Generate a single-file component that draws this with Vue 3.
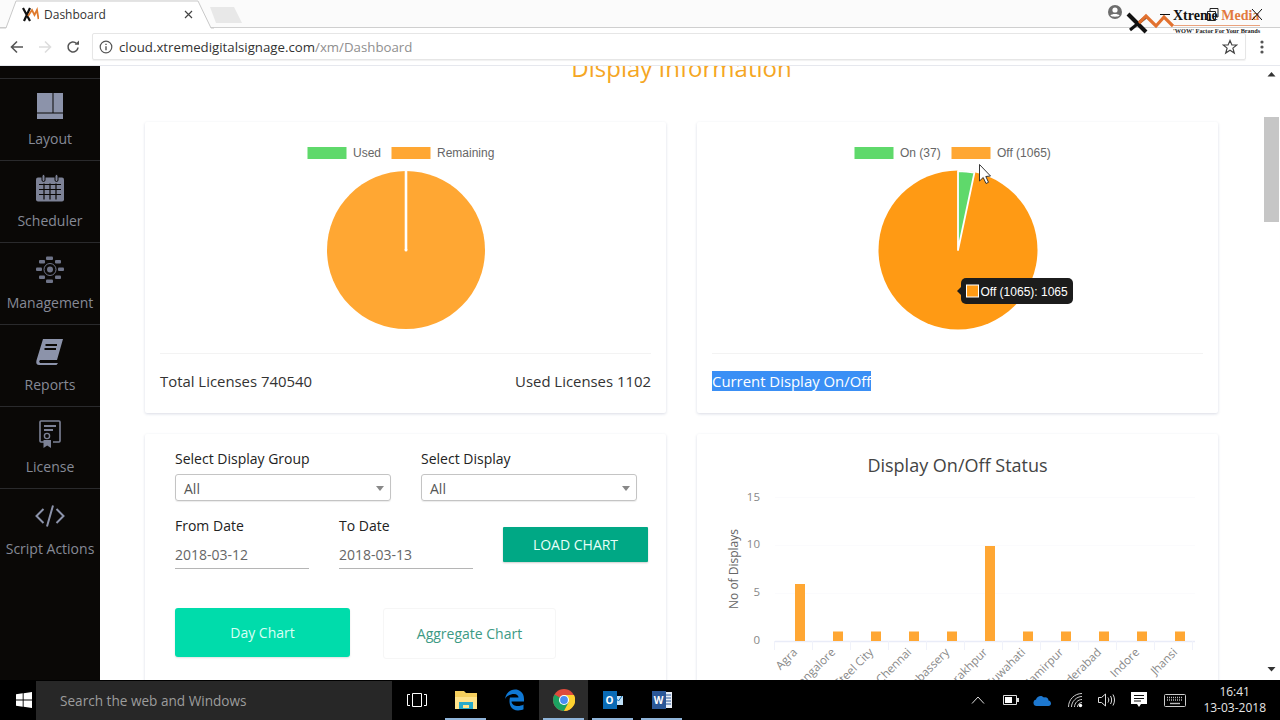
<template>
  <div class="screen">
    <!-- browser chrome -->
    <div class="tabstrip">
      <div class="tab">
        <svg class="tab-shape" width="214" height="29" viewBox="0 0 214 29">
          <path d="M0 28H6L16 1H198L211 28H214" fill="#fff" stroke="#c9c9c9" />
        </svg>
        <svg class="favicon" width="17" height="15" viewBox="0 0 17 15">
          <path d="M1 1L8 14M8 1L2 14" stroke="#111" stroke-width="2.2" fill="none" />
          <path d="M6 9L10 3L12.5 8L15 3L16.5 12" stroke="#e07b2e" stroke-width="1.8" fill="none" />
        </svg>
        <span class="tab-title">Dashboard</span>
        <span class="tab-close">
          <svg width="9" height="9" viewBox="0 0 9 9"><path d="M1 1L8 8M8 1L1 8" stroke="#444" stroke-width="1.2" /></svg>
        </span>
      </div>
      <svg class="newtab" width="34" height="17" viewBox="0 0 34 17"><path d="M0 0H24L32 16H6Z" fill="#e8e8e8" /></svg>
    </div>
    <div class="logo-overlay">
      <svg class="user-ic" width="16" height="16" viewBox="0 0 16 16">
        <circle cx="8" cy="8" r="7" fill="#6d6d6d" />
        <circle cx="8" cy="6" r="2.6" fill="#fff" />
        <path d="M3.4 11.6C4.6 9.6 11.4 9.6 12.6 11.6C11.4 13.2 4.6 13.2 3.4 11.6Z" fill="#fff" />
      </svg>
      <svg class="logo-mark" width="48" height="22" viewBox="0 0 48 22">
        <path d="M2 2L20 20" stroke="#111" stroke-width="4" />
        <path d="M20 5L4 18" stroke="#111" stroke-width="3" />
        <path d="M13 11L20 4L30 14L38 5L47 14" stroke="#e2712f" stroke-width="3.2" fill="none" />
      </svg>
      <div class="logo-words">
        <div class="logo-name">Xtreme <em>Media</em></div>
        <div class="logo-tag">'WOW' Factor For Your Brands</div>
      </div>
      <svg class="win-ctl" width="112" height="14" viewBox="0 0 112 14">
        <path d="M10 6.5H20" stroke="#111" />
        <path d="M57.5 3.5H65.5V12.5H57.5ZM60 3V.5H68V9H66" stroke="#222" fill="none" />
        <path d="M102 1L112 12M112 1L102 12" stroke="#111" />
      </svg>
    </div>
    <div class="toolbar">
      <svg class="nav-ic" width="14" height="14" viewBox="0 0 14 14"><path d="M13 7H2M7 1.5L1.5 7L7 12.5" stroke="#555" stroke-width="1.6" fill="none" /></svg>
      <svg class="nav-ic" width="14" height="14" viewBox="0 0 14 14"><path d="M1 7H12M7 1.5L12.5 7L7 12.5" stroke="#ddd" stroke-width="1.6" fill="none" /></svg>
      <svg class="nav-ic" width="14" height="14" viewBox="0 0 14 14"><path d="M12 7.5A5 5 0 1 1 10.4 3.3" stroke="#555" stroke-width="1.6" fill="none" /><path d="M8.6 4.8H13V.5Z" fill="#555" /></svg>
      <div class="omnibox">
        <svg width="14" height="14" viewBox="0 0 14 14">
          <circle cx="7" cy="7" r="5.8" stroke="#555" stroke-width="1.2" fill="none" />
          <path d="M7 6.2V10.2M7 3.8V5" stroke="#555" stroke-width="1.4" />
        </svg>
        <span class="url">cloud.xtremedigitalsignage.com<span class="url-path">/xm/Dashboard</span></span>
        <svg class="star" width="16" height="16" viewBox="0 0 16 16">
          <path d="M8 1.5L9.9 6H14.8L10.9 9.1L12.3 14L8 11.2L3.7 14L5.1 9.1L1.2 6H6.1Z" stroke="#444" stroke-width="1.2" fill="none" />
        </svg>
      </div>
      <svg class="kebab" width="4" height="14" viewBox="0 0 4 14">
        <circle cx="2" cy="2" r="1.6" fill="#555" /><circle cx="2" cy="7" r="1.6" fill="#555" /><circle cx="2" cy="12" r="1.6" fill="#555" />
      </svg>
    </div>

    <div class="main">
      <!-- side menu -->
      <nav class="sidebar">
        <a class="nav-item">
          <svg width="26" height="26" viewBox="0 0 26 26">
            <path d="M0 0H15.5V19.5H0ZM16.5 0H26V19.5H16.5ZM0 20.5H26V26H0Z" fill="#8c93aa" />
          </svg>
          <span>Layout</span>
        </a>
        <a class="nav-item">
          <svg width="28" height="27" viewBox="0 0 28 27">
            <path d="M2 3H26A2 2 0 0 1 28 5V25A2 2 0 0 1 26 27H2A2 2 0 0 1 0 25V5A2 2 0 0 1 2 3Z" fill="#7d8296" />
            <rect x="6" y="0" width="3" height="7" rx="1.5" fill="#7d8296" stroke="#0a0806" />
            <rect x="19" y="0" width="3" height="7" rx="1.5" fill="#7d8296" stroke="#0a0806" />
            <path d="M3 10H25M3 15H25M3 20H25M8 9V25M14 9V25M20 9V25" stroke="#0a0806" stroke-width="1.2" />
          </svg>
          <span>Scheduler</span>
        </a>
        <a class="nav-item">
          <svg width="28" height="27" viewBox="0 0 28 27">
            <g fill="#6f7488">
              <rect x="10" y="0" width="7" height="3.5" rx="1" />
              <rect x="19" y="3.5" width="6" height="3.5" rx="1" />
              <rect x="22" y="11" width="6" height="3.5" rx="1" />
              <rect x="19" y="19" width="6" height="3.5" rx="1" />
              <rect x="10" y="23" width="7" height="3.5" rx="1" />
              <rect x="3" y="19" width="6" height="3.5" rx="1" />
              <rect x="0" y="11" width="6" height="3.5" rx="1" />
              <rect x="3" y="3.5" width="6" height="3.5" rx="1" />
            </g>
            <circle cx="14" cy="13" r="6" stroke="#6f7488" fill="none" />
            <circle cx="14" cy="13" r="3" fill="#6f7488" />
          </svg>
          <span>Management</span>
        </a>
        <a class="nav-item">
          <svg width="28" height="26" viewBox="0 0 28 26">
            <path d="M7 0H27L21 21H4A2 2 0 0 0 4 24H22L20.5 26H3C0 26 0 23 .6 21Z" fill="#8c93aa" />
            <path d="M9.5 6H21M8.5 10H20" stroke="#0a0806" stroke-width="1.8" />
          </svg>
          <span>Reports</span>
        </a>
        <a class="nav-item">
          <svg width="22" height="28" viewBox="0 0 22 28">
            <path d="M7 22H2A1 1 0 0 1 1 21V2A1 1 0 0 1 2 1H20A1 1 0 0 1 21 2V21A1 1 0 0 1 20 22H14" stroke="#7d8296" stroke-width="1.6" fill="none" />
            <path d="M5 6H17M5 10H14" stroke="#7d8296" stroke-width="1.8" />
            <circle cx="8" cy="16" r="2.6" stroke="#7d8296" stroke-width="1.4" fill="none" />
            <path d="M4.5 20H12V28L8.2 25.5L4.5 28Z" fill="#7d8296" />
          </svg>
          <span>License</span>
        </a>
        <a class="nav-item">
          <svg width="30" height="24" viewBox="0 0 30 24">
            <path d="M8.5 5L1.5 12L8.5 19M21.5 5L28.5 12L21.5 19M18 1.5L12 22.5" stroke="#8c93aa" stroke-width="2" fill="none" />
          </svg>
          <span>Script Actions</span>
        </a>
      </nav>

      <div class="content">
        <h2 class="page-title">Display Information</h2>
        <div class="cards">
          <section class="card">
            <svg class="pie" width="521" height="230" viewBox="145 123 521 230">
              <rect x="307.500" y="147" width="39" height="12" fill="#5fd96b" />
              <text x="353" y="157" class="legend">Used</text>
              <rect x="391.500" y="147" width="39" height="12" fill="#ffa733" />
              <text x="437" y="157" class="legend">Remaining</text>
              <circle cx="406" cy="250" r="79" fill="#ffa733" />
              <path d="M406 250V170" stroke="#fff" stroke-width="2.600" />
              <circle cx="406" cy="250" r="1.500" fill="#fff" />
            </svg>
            <div class="card-foot">
              <span>Total Licenses 740540</span>
              <span>Used Licenses 1102</span>
            </div>
          </section>

          <section class="card">
            <svg class="pie" width="521" height="230" viewBox="697 123 521 230">
              <rect x="854.500" y="147" width="39" height="12" fill="#5fd96b" />
              <text x="900" y="157" class="legend">On (37)</text>
              <rect x="951.500" y="147" width="39" height="12" fill="#ffa733" />
              <text x="997" y="157" class="legend">Off (1065)</text>
              <circle cx="958" cy="250" r="79.500" fill="#ff9a14" />
              <path d="M958 250V171A79 79 0 0 1 974.400 172.700Z" fill="#5fd96b" stroke="#fff" stroke-width="1.800" stroke-linejoin="round" />
              <path d="M957 291L962 286V296Z" fill="#1c1c1c" />
              <rect x="961" y="278" width="112" height="26" rx="5" fill="#1c1c1c" />
              <rect x="966.500" y="285" width="12" height="12" fill="#ff9a14" stroke="#fff" />
              <text x="980.500" y="295.500" class="tip">Off (1065): 1065</text>
              <path d="M979.500 164.500V181L983.200 177.500L986 183.500L988.500 182.300L985.800 176.500L990.500 176Z" fill="#fff" stroke="#222" stroke-width=".9" />
            </svg>
            <div class="card-foot">
              <span class="picked">Current Display On/Off</span>
            </div>
          </section>

          <section class="card filter-card">
            <div class="row">
              <div class="field">
                <label>Select Display Group</label>
                <div class="select">All<i class="caret"></i></div>
              </div>
              <div class="field">
                <label>Select Display</label>
                <div class="select">All<i class="caret"></i></div>
              </div>
            </div>
            <div class="row dates">
              <div class="field date">
                <label>From Date</label>
                <div class="date-input">2018-03-12</div>
              </div>
              <div class="field date">
                <label>To Date</label>
                <div class="date-input">2018-03-13</div>
              </div>
              <button class="load-btn">LOAD CHART</button>
            </div>
            <div class="row chart-tabs">
              <button class="day-btn">Day Chart</button>
              <button class="agg-btn">Aggregate Chart</button>
            </div>
          </section>

          <section class="card">
            <svg class="bars" width="521" height="260" viewBox="697 435 521 260">
              <text x="957.500" y="472" class="chart-title">Display On/Off Status</text>
              <text x="760" y="501" class="tick">15</text>
              <text x="760" y="548" class="tick">10</text>
              <text x="760" y="596" class="tick">5</text>
              <text x="760" y="644" class="tick">0</text>
              <path d="M775 593.500H1195M775 545.500H1195M775 497.500H1195" stroke="#fbfbfd" />
              <path d="M775 641.500H1195" stroke="#e9ecf8" stroke-width="1.500" />
              <path v-for="i in 12" :key="i" :d="`M${774.500 + (i - 1) * 38} 641V650`" stroke="#f0f2fa" />
              <text class="y-title" transform="translate(738 569) rotate(-90)">No of Displays</text>
              <g v-for="(bar, i) in barData" :key="bar.name">
                <rect :x="795 + i * 38" :y="641 - bar.value * 9.5" width="10" :height="bar.value * 9.5" fill="#ffa733" />
                <text class="x-label" :transform="`translate(${798 + i * 38} 653) rotate(-45)`">{{ bar.name }}</text>
              </g>
            </svg>
          </section>
        </div>
      </div>

      <div class="scrollbar">
        <svg width="17" height="17" viewBox="0 0 17 17"><path d="M4.500 10.500L8.500 6L12.500 10.500Z" fill="#333" /></svg>
        <div class="thumb"></div>
        <svg class="arrow-down" width="17" height="17" viewBox="0 0 17 17"><path d="M4.500 4L8.500 8.500L12.500 4Z" fill="#333" /></svg>
      </div>
    </div>

    <!-- windows taskbar -->
    <div class="taskbar">
      <svg class="win-logo" width="16" height="16" viewBox="0 0 16 16">
        <path d="M0 2.300L6.700 1.300V7.600H0ZM7.600 1.200L16 0V7.600H7.600ZM0 8.400H6.700V14.700L0 13.700ZM7.600 8.400H16V16L7.600 14.800Z" fill="#fff" />
      </svg>
      <div class="search">Search the web and Windows</div>
      <div class="task-icons">
        <div class="task-ic">
          <svg width="20" height="14" viewBox="0 0 20 14">
            <path d="M5.500 .5H14.500V13.500H5.500Z" stroke="#fff" fill="none" />
            <path d="M3 1.500H.5V12.500H3M17 1.500H19.500V12.500H17" stroke="#fff" fill="none" />
          </svg>
        </div>
        <div class="task-ic open">
          <svg width="22" height="20" viewBox="0 0 22 20">
            <path d="M0 1H9L11 3H22V19H0Z" fill="#f5cf5d" />
            <path d="M0 7H22V19H0Z" fill="#ffe38a" />
            <path d="M4 12H18V19H4Z" fill="#27a9c9" />
            <path d="M8 15H14V18H8Z" fill="#ffe38a" />
          </svg>
        </div>
        <div class="task-ic">
          <svg width="20" height="22" viewBox="0 0 20 22">
            <path d="M3 12.500H19V10C19 3 14 .5 10 .5C5 .5 1 4 0 10C2 6.500 6 5 9 5C12 5 13.500 7 13.500 8.500H5C3.800 12 4 21.500 13 21.500C15.500 21.500 17.500 21 18.500 20.300V15.500C15 17.800 7 18 6.500 12.500" fill="#0f78d4" />
          </svg>
        </div>
        <div class="task-ic active open">
          <svg width="22" height="22" viewBox="0 0 22 22">
            <circle cx="11" cy="11" r="11" fill="#de4b3c" />
            <path d="M11 11L1.500 5.500A11 11 0 0 0 11 22L16 13Z" fill="#1ca261" />
            <path d="M11 6H21A11 11 0 0 1 11 22L15.500 13.500Z" fill="#fcd12f" />
            <circle cx="11" cy="11" r="5" fill="#fff" />
            <circle cx="11" cy="11" r="3.900" fill="#4a8df2" />
          </svg>
        </div>
        <div class="task-ic open">
          <div class="office outlook"><b>O</b><svg width="9" height="12" viewBox="0 0 9 12"><path d="M0 2H9V11H0Z" fill="#bfe0f7" /><path d="M1 3.500L4.500 7L8 2" stroke="#0a6bb5" fill="none" /></svg></div>
        </div>
        <div class="task-ic open">
          <div class="office word"><b>W</b><svg width="8" height="16" viewBox="0 0 8 16"><path d="M0 0H8V16H0Z" fill="#e8eef7" /><path d="M1 3H7M1 6H7M1 9H7M1 12H7" stroke="#2b5797" /></svg></div>
        </div>
      </div>
      <div class="tray">
        <svg class="t-chev" width="14" height="8" viewBox="0 0 14 8"><path d="M1 7.500L7 1L13 7.500" stroke="#ddd" fill="none" /></svg>
        <svg class="t-batt" width="16" height="10" viewBox="0 0 16 10"><path d="M.5 .5H13.500V9.500H.5Z" stroke="#ddd" fill="none" /><path d="M2 2H9V8H2Z" fill="#fff" /><path d="M14 3H16V7H14Z" fill="#ddd" /></svg>
        <svg class="t-cloud" width="18" height="11" viewBox="0 0 18 11"><path d="M3.500 11A3.300 3.300 0 0 1 3 4.500C4 1 8.500 -.500 11 2.500C14 1.800 15.500 4 15.500 5.500C17 5.700 18 7 18 8.500C18 10 17 11 15.500 11Z" fill="#1d78d0" /></svg>
        <svg class="t-wifi" width="15" height="15" viewBox="0 0 15 15"><path d="M.5 14C.5 6.500 6.500 .5 14 .5M3.500 14C3.500 8.500 8.500 3.500 14 3.500M6.500 14C6.500 10 10 6.500 14 6.500M9.500 14C9.500 11.500 11.500 9.500 14 9.500" stroke="#ccc" fill="none" /><circle cx="12.500" cy="12.500" r="1.700" fill="#fff" /></svg>
        <svg class="t-vol" width="17" height="14" viewBox="0 0 17 14"><path d="M.5 4.500H3.500L7.500 1V13L3.500 9.500H.5Z" stroke="#ddd" fill="none" /><path d="M10 4.500C11 6 11 8 10 9.500M12.500 3C14 5.500 14 8.500 12.500 11M15 1.500C17 5 17 9 15 12.500" stroke="#ddd" fill="none" /></svg>
        <svg class="t-note" width="16" height="16" viewBox="0 0 16 16"><path d="M0 0H16V12H10L8 15L6 12H0Z" fill="#fff" /><path d="M3 3.500H13M3 6.500H13M3 9H10" stroke="#111" /></svg>
        <svg class="t-keys" width="22" height="13" viewBox="0 0 22 13"><rect x=".5" y=".5" width="21" height="12" rx="1" stroke="#ccc" fill="none" /><path d="M3 3.500H19M3 6H19" stroke="#bbb" stroke-width="1.400" stroke-dasharray="1 1" /><path d="M6 9.500H16" stroke="#bbb" stroke-width="1.400" /></svg>
        <div class="clock">
          <span>16:41</span>
          <span>13-03-2018</span>
        </div>
      </div>
    </div>
  </div>
</template>

<script setup>
const barData = [
  { name: 'Agra', value: 6 },
  { name: 'Bangalore', value: 1 },
  { name: 'Steel City', value: 1 },
  { name: 'Chennai', value: 1 },
  { name: 'Ambassery', value: 1 },
  { name: 'Gorakhpur', value: 10 },
  { name: 'Guwahati', value: 1 },
  { name: 'Hamirpur', value: 1 },
  { name: 'Hyderabad', value: 1 },
  { name: 'Indore', value: 1 },
  { name: 'Jhansi', value: 1 }
]
</script>

<style>
html,
body {
  margin: 0;
  overflow: hidden;
}
</style>

<style scoped>
.screen {
  position: relative;
  width: 1280px;
  height: 720px;
  display: flex;
  flex-direction: column;
  overflow: hidden;
  background: #fff;
  font-family: "Open Sans", "Noto Sans", sans-serif;
}

/* Браузер */
.tabstrip {
  height: 28px;
  flex: none;
  display: flex;
  align-items: flex-start;
  background: #fbfbfb;
  border-bottom: 1px solid #cfcfcf;
  box-sizing: border-box;
}

.tab {
  position: relative;
  width: 210px;
  height: 28px;
  display: flex;
  align-items: center;
  padding-left: 22px;
  box-sizing: border-box;
}

.tab-shape {
  position: absolute;
  left: 0;
  top: 0;
}

.favicon {
  position: relative;
  margin-right: 5px;
}

.tab-title {
  position: relative;
  font-size: 12px;
  color: #333;
}

.tab-close {
  position: absolute;
  left: 184px;
  top: 10px;
  line-height: 0;
}

.newtab {
  margin-top: 7px;
}

.logo-overlay {
  position: absolute;
  top: 0;
  left: 1100px;
  width: 180px;
  height: 40px;
}

.user-ic {
  position: absolute;
  left: 7px;
  top: 4px;
}

.logo-mark {
  position: absolute;
  left: 26px;
  top: 12px;
}

.logo-words {
  position: absolute;
  left: 73px;
  top: 7px;
  width: 87px;
}

.logo-name {
  font-family: "Liberation Serif", serif;
  font-weight: 700;
  font-size: 14px;
  line-height: 18px;
  color: #111;
  border-bottom: 1px solid #eaa27d;
  white-space: nowrap;
}

.logo-name em {
  font-style: normal;
  color: #e2793f;
}

.logo-tag {
  font-family: "Liberation Serif", serif;
  font-weight: 700;
  font-size: 6.300px;
  line-height: 9px;
  color: #222;
  white-space: nowrap;
}

.win-ctl {
  position: absolute;
  left: 50px;
  top: 8px;
}

.toolbar {
  height: 38px;
  flex: none;
  display: flex;
  align-items: center;
  gap: 14px;
  padding: 0 16px 0 10px;
  box-sizing: border-box;
  background: #fff;
  border-bottom: 1px solid #e6e8ee;
}

.nav-ic {
  flex: none;
}

.omnibox {
  flex: 1;
  height: 27px;
  margin-left: -2px;
  display: flex;
  align-items: center;
  gap: 6px;
  padding: 0 7px 0 6px;
  border: 1px solid #e6e6e6;
  border-radius: 2px;
  box-sizing: border-box;
  box-shadow: 0 1px 1px rgba(0, 0, 0, 0.06);
}

.url {
  flex: 1;
  font-size: 13.250px;
  color: #333;
}

.url-path {
  color: #8f8f8f;
}

.kebab {
  flex: none;
}

/* Основная часть */
.main {
  height: 614px;
  flex: none;
  display: flex;
  overflow: hidden;
}

.sidebar {
  width: 100px;
  flex: none;
  padding-top: 12px;
  box-sizing: border-box;
  background: #0a0806;
}

.nav-item {
  height: 82px;
  display: flex;
  flex-direction: column;
  align-items: center;
  justify-content: flex-start;
  border-top: 1px solid #2a2a2c;
  box-sizing: border-box;
  padding-top: 13px;
  position: relative;
}

.nav-item svg {
  height: 28px;
  flex: none;
}

.nav-item span {
  margin-top: 9px;
  font-size: 14px;
  line-height: 20px;
  color: #868a96;
  white-space: nowrap;
}

.content {
  flex: 1;
  min-width: 0;
  padding: 0 45px;
  overflow: hidden;
}

.page-title {
  margin: -14px 0 38px;
  font-size: 24px;
  line-height: 32px;
  font-weight: 400;
  text-align: center;
  color: #f5a623;
}

.cards {
  display: grid;
  grid-template-columns: 521px 521px;
  grid-template-rows: 291px 400px;
  column-gap: 31px;
  row-gap: 21px;
}

.card {
  background: #fff;
  box-shadow: 0 1px 3px rgba(70, 80, 130, 0.2);
  border-radius: 2px;
}

.pie,
.bars {
  display: block;
  margin-top: 1px;
}

.legend {
  font-family: "Liberation Sans", Arial, sans-serif;
  font-size: 12px;
  fill: #666;
}

.tip {
  font-family: "Liberation Sans", Arial, sans-serif;
  font-size: 12px;
  fill: #fff;
}

.card-foot {
  margin: 0 15px;
  height: 54px;
  display: flex;
  align-items: center;
  justify-content: space-between;
  border-top: 1px solid #f3f3f3;
  font-size: 14.900px;
  line-height: 20px;
  color: #333;
}

.picked {
  background: #3a8ff5;
  color: #fff;
}

.filter-card {
  padding: 15px 15px 15px 30px;
  box-sizing: border-box;
}

.row {
  display: flex;
  gap: 30px;
}

.field {
  width: 216px;
  flex: none;
  font-size: 14px;
  color: #222;
}

.field label {
  display: block;
  line-height: 19px;
}

.select {
  position: relative;
  height: 27px;
  margin-top: 6px;
  padding-left: 8px;
  line-height: 28px;
  border: 1px solid #c4c4c4;
  border-radius: 3px;
  box-sizing: border-box;
  box-shadow: 0 1px 1px rgba(0, 0, 0, 0.08);
  color: #555;
}

.caret {
  position: absolute;
  right: 6px;
  top: 11px;
  border-left: 4px solid transparent;
  border-right: 4px solid transparent;
  border-top: 5px solid #888;
}

.dates {
  margin-top: 15px;
  align-items: flex-start;
}

.field.date {
  width: 134px;
}

.date-input {
  height: 28px;
  margin-top: 6px;
  line-height: 28px;
  border-bottom: 1px solid #b5b5b5;
  box-sizing: border-box;
  color: #666;
}

.load-btn {
  width: 145px;
  height: 35px;
  flex: none;
  margin: 11px 0 0 0;
  border: 0;
  border-radius: 1px;
  background: #00a885;
  color: #e8fff9;
  font: 14px "Open Sans", sans-serif;
  box-shadow: 0 1px 2px rgba(0, 0, 0, 0.2);
}

.chart-tabs {
  margin-top: 39px;
  gap: 33px;
  align-items: flex-start;
}

.day-btn {
  width: 175px;
  height: 49px;
  border: 0;
  border-radius: 3px;
  background: #00dcab;
  color: #d9fff5;
  font: 14px "Open Sans", sans-serif;
  box-shadow: 0 1px 2px rgba(0, 0, 0, 0.12);
}

.agg-btn {
  width: 173px;
  height: 51px;
  border: 1px solid #f6f6f6;
  border-radius: 3px;
  background: #fff;
  color: #3d9a84;
  font: 14px "Open Sans", sans-serif;
}

.chart-title {
  font-size: 18px;
  fill: #444;
  text-anchor: middle;
}

.tick {
  font-size: 11.500px;
  fill: #888;
  text-anchor: end;
}

.y-title {
  font-size: 12px;
  fill: #666;
  text-anchor: middle;
}

.x-label {
  font-size: 11.500px;
  fill: #888;
  text-anchor: end;
}

.scrollbar {
  width: 17px;
  flex: none;
  display: flex;
  flex-direction: column;
  background: #fff;
}

.scrollbar svg {
  flex: none;
}

.thumb {
  height: 105px;
  margin: 34px 1px 0;
  background: #c6c6c6;
}

.arrow-down {
  margin-top: auto;
}

/* Панель задач */
.taskbar {
  height: 40px;
  flex: none;
  display: flex;
  align-items: center;
  background: #000;
}

.win-logo {
  margin: 0 4px 0 16px;
  flex: none;
}

.search {
  width: 356px;
  height: 39px;
  margin-top: 1px;
  padding-left: 24px;
  line-height: 39px;
  font-size: 13.600px;
  color: #9c9c9c;
  background: #272727;
  flex: none;
  box-sizing: border-box;
}

.task-icons {
  display: flex;
}

.task-ic {
  position: relative;
  width: 49px;
  height: 40px;
  display: flex;
  align-items: center;
  justify-content: center;
}

.task-ic.active {
  background: #2b2b2b;
}

.task-ic.open::after {
  content: "";
  position: absolute;
  left: 4px;
  right: 4px;
  bottom: 0;
  height: 2px;
  background: #8fb4d9;
}

.office {
  display: flex;
  align-items: center;
  justify-content: flex-end;
  width: 20px;
  height: 18px;
  position: relative;
}

.office b {
  position: absolute;
  left: 0;
  top: 0;
  width: 14px;
  height: 18px;
  line-height: 18px;
  text-align: center;
  font-size: 10px;
  color: #fff;
  z-index: 1;
}

.outlook b {
  background: #0a6bb5;
}

.word b {
  background: #2b5797;
}

.tray {
  margin-left: auto;
  position: relative;
  display: flex;
  align-items: center;
  height: 40px;
  padding-right: 14px;
}

.tray svg {
  flex: none;
}

.t-chev {
  margin-right: 18px;
}

.t-batt {
  margin-right: 14px;
}

.t-cloud {
  margin-right: 17px;
}

.t-wifi {
  margin-right: 15px;
}

.t-vol {
  margin-right: 16px;
}

.t-note {
  margin-right: 17px;
}

.t-keys {
  margin-right: 17px;
}

.clock {
  display: flex;
  flex-direction: column;
  align-items: center;
  font-size: 12px;
  line-height: 16px;
  color: #e6e6e6;
}
</style>
